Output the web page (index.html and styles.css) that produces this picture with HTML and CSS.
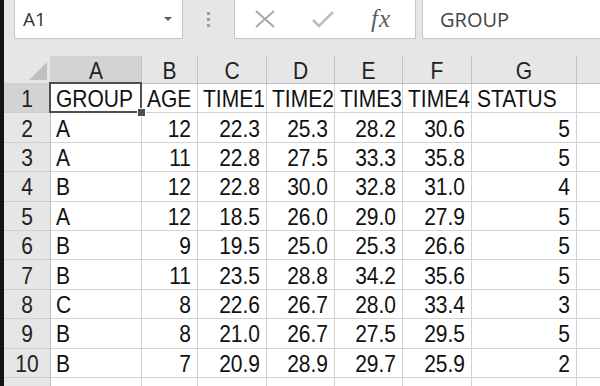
FILE: index.html
```html
<!DOCTYPE html>
<html lang="en">
<head>
    <meta charset="UTF-8">
    <title>Sheet1</title>
    <link rel="stylesheet" href="styles.css">
</head>
<body>
    <div class="edge"></div>
    <div class="app">
        <!-- Barra de fórmulas -->
        <div class="toolbar">
            <div class="name-box">
                <span>A1</span>
                <span class="arrow"></span>
            </div>
            <div class="grip"><i></i><i></i><i></i></div>
            <div class="buttons">
                <svg class="btn-icon" width="22" height="18" viewBox="0 0 22 18">
                    <path d="M2 1 L20 17 M20 1 L2 17" stroke="#a9a9a9" stroke-width="2" fill="none"/>
                </svg>
                <svg class="btn-icon" width="22" height="18" viewBox="0 0 22 18">
                    <path d="M1 10 L7 16 L21 2" stroke="#bdbdbd" stroke-width="2.6" fill="none"/>
                </svg>
                <span class="fx">fx</span>
            </div>
            <div class="formula">GROUP</div>
        </div>

        <!-- Planilha -->
        <div class="sheet" id="sheet"></div>
    </div>

    <script>
        const cols = ['A', 'B', 'C', 'D', 'E', 'F', 'G', ''];
        const rows = [
            ['GROUP', 'AGE', 'TIME1', 'TIME2', 'TIME3', 'TIME4', 'STATUS'],
            ['A', 12, '22.3', '25.3', '28.2', '30.6', 5],
            ['A', 11, '22.8', '27.5', '33.3', '35.8', 5],
            ['B', 12, '22.8', '30.0', '32.8', '31.0', 4],
            ['A', 12, '18.5', '26.0', '29.0', '27.9', 5],
            ['B', 9, '19.5', '25.0', '25.3', '26.6', 5],
            ['B', 11, '23.5', '28.8', '34.2', '35.6', 5],
            ['C', 8, '22.6', '26.7', '28.0', '33.4', 3],
            ['B', 8, '21.0', '26.7', '27.5', '29.5', 5],
            ['B', 7, '20.9', '28.9', '29.7', '25.9', 2],
            ['', '', '', '', '', '', '']
        ];
        const sheet = document.getElementById('sheet');

        function cell(cls, text) {
            const div = document.createElement('div');
            div.className = cls;
            const span = document.createElement('span');
            span.textContent = text;
            div.appendChild(span);
            sheet.appendChild(div);
            return div;
        }

        // Cabeçalho das colunas
        cell('corner', '');
        cols.forEach((c, i) => cell('col-head' + (i === 0 ? ' selected' : ''), c));

        // Linhas
        rows.forEach((row, r) => {
            cell('row-head' + (r === 0 ? ' selected' : ''), r < 10 ? r + 1 : '');
            row.forEach((value, c) => {
                const isNum = r > 0 && c > 0;
                const div = cell('cell' + (isNum ? ' num' : ''), value);
                if (r === 0 && c === 0) div.classList.add('active');
            });
            cell('cell', '');
        });
    </script>
</body>
</html>
```

FILE: styles.css
```css
html {
    overflow: hidden;
}

body {
    margin: 0;
    height: 386px;
    overflow: hidden;
    display: flex;
    background: #e6e6e6;
    font-family: "Liberation Sans", Arial, sans-serif;
}

.edge {
    width: 4px;
    flex-shrink: 0;
    background: #141414;
}

.app {
    flex: 1;
    min-width: 0;
    overflow: hidden;
    display: flex;
    flex-direction: column;
    gap: 17px;
}

/* Barra de fórmulas */
.toolbar {
    height: 40px;
    margin-top: -1px;
    display: flex;
    padding-left: 10px;
}

.name-box,
.buttons,
.formula {
    background: #fff;
    border: 1px solid #c6c6c6;
    box-sizing: border-box;
    height: 40px;
    display: flex;
    align-items: center;
}

.name-box {
    width: 169px;
    padding: 0 10px 0 8px;
    justify-content: space-between;
    font-family: "Open Sans", sans-serif;
    font-size: 19px;
    color: #333;
}

.arrow {
    width: 0;
    height: 0;
    border-left: 4px solid transparent;
    border-right: 4px solid transparent;
    border-top: 4px solid #5e5e5e;
}

.grip {
    width: 51px;
    display: flex;
    flex-direction: column;
    align-items: center;
    justify-content: center;
    gap: 3px;
}

.grip i {
    width: 3px;
    height: 3px;
    background: #9c9c9c;
}

.buttons {
    width: 182px;
    padding-left: 19px;
    gap: 36px;
}

.fx {
    font-family: "Liberation Serif", serif;
    font-style: italic;
    font-size: 25px;
    color: #5e5e5e;
    margin-left: 1px;
    letter-spacing: 1px;
}

.formula {
    flex: 1;
    margin-left: 6px;
    border-right: none;
    padding-left: 17px;
    font-family: "Open Sans", sans-serif;
    font-size: 20px;
    color: #444;
}

/* Planilha */
.sheet {
    display: grid;
    grid-template-columns: 47px 91px 56px 69px 68px 68px 69px 105px 30px;
    grid-template-rows: 28px repeat(11, 29.4px);
    font-size: 21px;
    color: #111;
}

.sheet > div {
    box-sizing: border-box;
    border-right: 1px solid #d2d2d2;
    border-bottom: 1px solid #d2d2d2;
    display: flex;
    align-items: center;
    white-space: nowrap;
    overflow: visible;
}

.sheet span {
    display: inline-block;
    transform: scaleY(1.12);
    padding-top: 2px;
}

.corner {
    position: relative;
    background: #e6e6e6;
}

.corner::after {
    content: "";
    position: absolute;
    right: 3px;
    bottom: 3px;
    border-left: 18px solid transparent;
    border-bottom: 18px solid #bfbfbf;
}

.col-head {
    justify-content: center;
    background: #e6e6e6;
    color: #222;
    border-right-color: #c4c4c4 !important;
    border-bottom-color: #bcbcbc !important;
}

.row-head {
    justify-content: center;
    background: #e6e6e6;
    color: #222;
    border-right-color: #bcbcbc !important;
    border-bottom-color: #cfcfcf !important;
}

.col-head.selected,
.row-head.selected {
    background: #d3d3d3;
}

.cell {
    background: #fff;
    padding: 0 4px 0 5px;
}

.cell.num {
    justify-content: flex-end;
    padding-right: 6px;
}

.cell.active {
    position: relative;
}

.cell.active::before {
    content: "";
    position: absolute;
    inset: -2px -1px -1px -2px;
    border: 2px solid #4e4e4e;
}

.cell.active::after {
    content: "";
    position: absolute;
    right: -5px;
    bottom: -5px;
    width: 7px;
    height: 7px;
    background: #4e4e4e;
    border: 1px solid #fff;
    z-index: 1;
}
```
